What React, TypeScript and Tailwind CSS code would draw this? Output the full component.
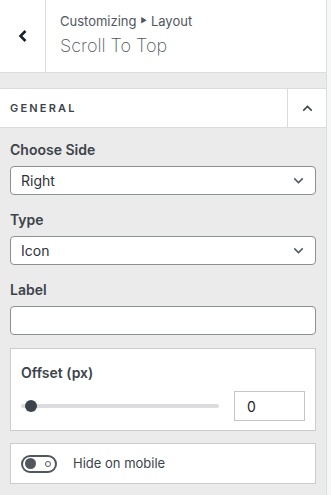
import React from "react";

const Chevron = ({ up = false }: { up?: boolean }) => (
    <svg viewBox="0 0 24 24" className="w-[17px] h-[17px]" fill="none" stroke="currentColor" strokeWidth={2}>
        <path d={up ? "M6 15l6-6 6 6" : "M6 9l6 6 6-6"} />
    </svg>
);

const SelectBox = ({ value }: { value: string }) => (
    <div className="h-[29px] w-full flex items-center justify-between rounded-[4px] border border-[#8c8f94] bg-white pl-[10px] pr-[8px] text-[14px] text-[#2c3338]">
        <span>{value}</span>
        <span className="text-[#50575e]">
            <Chevron />
        </span>
    </div>
);

const App = () => {
    return (
        <div className="w-[331px] h-[495px] flex bg-[#f6f7f7] font-['Inter',sans-serif] overflow-hidden">
            <div className="w-[327px] h-full flex flex-col bg-[#ebebeb] border-r border-[#dcdcde]">
                <header className="h-[73px] flex bg-white border-b border-[#dcdcde] shrink-0">
                    <button className="w-[46px] h-full flex justify-center items-center border-r border-[#dcdcde] text-[#1d2327]">
                        <svg viewBox="0 0 24 24" className="w-[24px] h-[24px]" fill="none" stroke="currentColor" strokeWidth={2.6}>
                            <path d="M14.5 7l-5 5 5 5" />
                        </svg>
                    </button>
                    <div className="flex flex-col pl-[14px] pt-[12px]">
                        <span className="text-[13px] leading-[18px] text-[#50575e] flex items-center">
                            Customizing<span className="text-[7px] mx-[4px]">▶</span>Layout
                        </span>
                        <span className="text-[18px] leading-[26px] mt-[3px] font-extralight text-[#50575e]">Scroll To Top</span>
                    </div>
                </header>
                <div className="h-[15px] shrink-0"></div>
                <div className="h-[40px] flex bg-white border-y border-[#dcdcde] shrink-0">
                    <div className="flex-1 flex items-center pl-[10px] text-[11px] font-semibold tracking-[0.2em] text-[#3c434a]">GENERAL</div>
                    <div className="w-[39px] flex justify-center items-center border-l border-[#dcdcde] text-[#3c434a]">
                        <Chevron up />
                    </div>
                </div>
                <section className="flex flex-col px-[10px] pt-[12px]">
                    <label className="text-[14px] font-semibold text-[#3c434a] leading-[20px] mb-[6px]">Choose Side</label>
                    <SelectBox value="Right" />
                    <label className="text-[14px] font-semibold text-[#3c434a] leading-[20px] mt-[15px] mb-[6px]">Type</label>
                    <SelectBox value="Icon" />
                    <label className="text-[14px] font-semibold text-[#3c434a] leading-[20px] mt-[15px] mb-[6px]">Label</label>
                    <div className="h-[29px] w-full rounded-[4px] border border-[#8c8f94] bg-white"></div>
                    <div className="mt-[13px] h-[83px] bg-white border border-[#ccc] px-[10px] pt-[14px]">
                        <div className="text-[14px] font-semibold text-[#3c434a] leading-[20px]">Offset (px)</div>
                        <div className="flex items-center mt-[8px]">
                            <div className="relative w-[198px] h-[4px] rounded-full bg-[#dcdcde]">
                                <span className="absolute left-[4px] top-[-4px] w-[12px] h-[12px] rounded-full bg-[#3c434a]"></span>
                            </div>
                            <div className="ml-[15px] w-[71px] h-[30px] border border-[#c3c4c7] flex items-center pl-[12px] text-[14px] text-[#1d2327]">0</div>
                        </div>
                    </div>
                    <div className="mt-[12px] h-[41px] bg-white border border-[#ccc] flex items-center px-[10px]">
                        <div className="w-[36px] h-[18px] rounded-full border-2 border-[#50575e] flex items-center justify-between px-[2px]">
                            <span className="w-[11px] h-[11px] rounded-full bg-[#50575e]"></span>
                            <span className="w-[6px] h-[6px] rounded-full border border-[#50575e] mr-[2px]"></span>
                        </div>
                        <span className="ml-[16px] text-[13px] text-[#3c434a]">Hide on mobile</span>
                    </div>
                </section>
            </div>
        </div>
    );
};

export default App;
